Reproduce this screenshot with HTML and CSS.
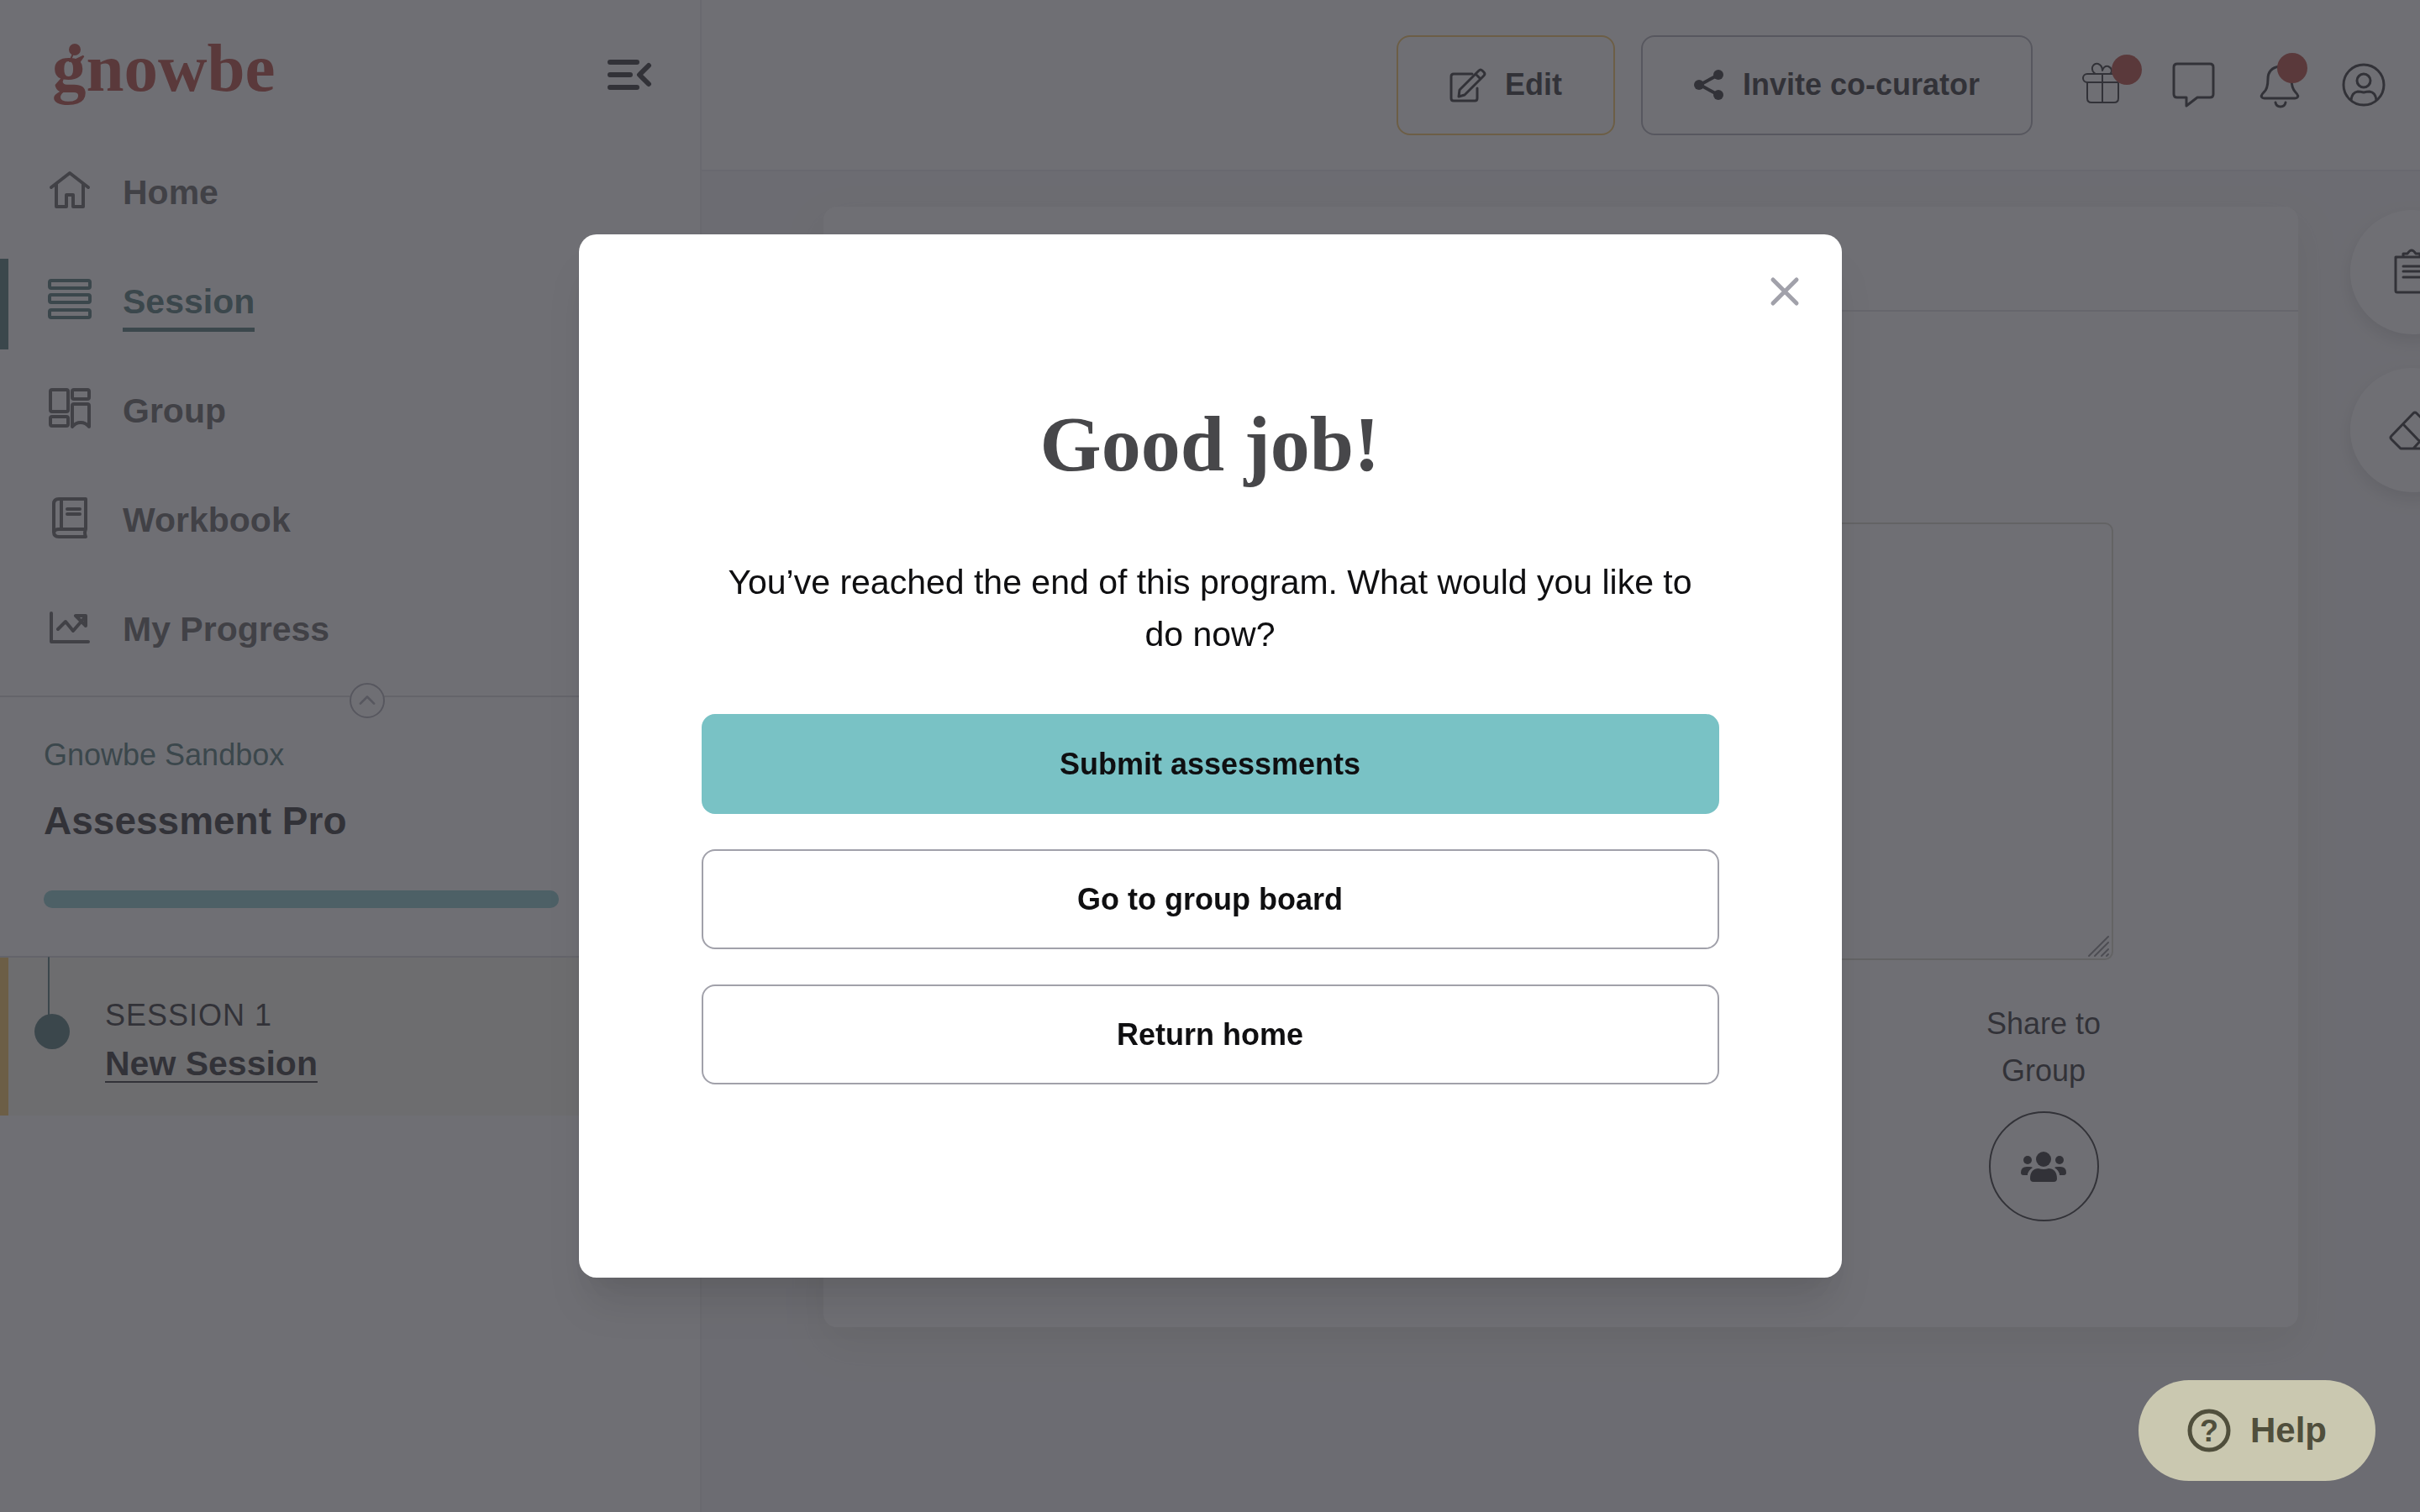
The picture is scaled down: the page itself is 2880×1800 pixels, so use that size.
FILE: index.html
```html
<!DOCTYPE html>
<html lang="en">
<head>
    <meta charset="UTF-8">
    <meta name="viewport" content="width=device-width, initial-scale=1.0">
    <title>Assessment Pro - Gnowbe</title>
    <link rel="stylesheet" href="styles.css">
</head>
<body>
    <div class="app">
        <aside class="sidebar">
            <div class="sidebar-header">
                <a href="#" class="logo">gnowbe<svg class="logo-dot" viewBox="0 0 16 28"><circle cx="10" cy="8" r="6"/><path d="M8 13L4 22"/></svg></a>
                <button type="button" class="icon-btn" aria-label="Collapse menu">
                    <svg class="icon-menu" viewBox="0 0 52 36"><path d="M3 3h32M3 18h24M3 33h32M49 7L38 18l11 11"/></svg>
                </button>
            </div>

            <nav class="menu">
                <a href="#" class="menu-item">
                    <svg class="menu-icon" viewBox="0 0 52 52"><path d="M4 23L26 6l22 17M10 19v27h12V32h8v14h12V19"/></svg>
                    <span class="menu-label">Home</span>
                </a>
                <a href="#" class="menu-item active">
                    <svg class="menu-icon" viewBox="0 0 52 52"><rect x="2" y="4" width="48" height="9" rx="2"/><rect x="2" y="21" width="48" height="9" rx="2"/><rect x="2" y="39" width="48" height="9" rx="2"/></svg>
                    <span class="menu-label">Session</span>
                </a>
                <a href="#" class="menu-item">
                    <svg class="menu-icon" viewBox="0 0 52 52"><rect x="3" y="4" width="21" height="26" rx="2"/><rect x="3" y="36" width="21" height="11" rx="2"/><rect x="29" y="4" width="20" height="11" rx="2"/><path d="M29 48V23q0-2 2-2h16q2 0 2 2v25q-4-5-10-5t-10 5z"/></svg>
                    <span class="menu-label">Group</span>
                </a>
                <a href="#" class="menu-item">
                    <svg class="menu-icon" viewBox="0 0 52 52"><path d="M45 49H13q-6 0-6-6V10q0-6 6-6h32v36H13q-5 0-6 4M45 40q-2 4 0 9M16 4v36M23 16h15M23 22h15"/></svg>
                    <span class="menu-label">Workbook</span>
                </a>
                <a href="#" class="menu-item">
                    <svg class="menu-icon" viewBox="0 0 52 52"><path d="M4 10v34h44M12 29l9-9 9 11 14-16M33 13h12v12z"/></svg>
                    <span class="menu-label">My Progress</span>
                </a>
            </nav>

            <section class="program">
                <button type="button" class="collapse-btn" aria-label="Collapse">
                    <svg viewBox="0 0 42 42"><path d="M12 25l9-9 9 9"/></svg>
                </button>
                <p class="program-company">Gnowbe Sandbox</p>
                <h2 class="program-title">Assessment Pro</h2>
                <div class="progress-bar"></div>
            </section>

            <a href="#" class="session">
                <svg class="session-dot" viewBox="0 0 44 110"><path d="M18 0v80"/><circle cx="22" cy="88" r="21"/></svg>
                <span class="session-number">SESSION 1</span>
                <span class="session-name">New Session</span>
            </a>
        </aside>

        <div class="content">
            <header class="topbar">
                <button type="button" class="btn btn-edit">
                    <svg class="icon-edit" viewBox="0 0 44 44"><path d="M27 9H5q-3 0-3 3v26q0 3 3 3h25q3 0 3-3V26"/><path d="M11 36l1-8L35 5q2-2 4 0l2 2q2 2 0 4L18 34zM31 9l6 6"/></svg>
                    Edit
                </button>
                <button type="button" class="btn btn-invite">
                    <svg class="icon-share" viewBox="0 0 36 38"><path d="M7 19L29 7M7 19l22 12"/><circle cx="6" cy="19" r="6"/><circle cx="29" cy="7" r="6"/><circle cx="29" cy="31" r="6"/></svg>
                    Invite co-curator
                </button>
                <div class="topbar-icons">
                    <button type="button" class="icon-btn" aria-label="Gifts">
                        <svg class="top-icon thin" viewBox="0 0 54 54"><path d="M4 25v18q0 5 5 5h27q5 0 5-5V25"/><rect x="-1" y="14" width="46" height="10" rx="5"/><path d="M22 14v34M22 14H14q-5-3-4-8 2-5 7-4 5 2 5 8 2-6 7-5 4 2 4 5 0 3-2 4"/></svg>
                        <span class="badge"></span>
                    </button>
                    <button type="button" class="icon-btn" aria-label="Messages">
                        <svg class="top-icon" viewBox="0 0 54 54"><path d="M9 2h39q4 0 4 4v32q0 4-4 4H33L20 52V42H9q-4 0-4-4V6q0-4 4-4z"/></svg>
                    </button>
                    <button type="button" class="icon-btn" aria-label="Notifications">
                        <svg class="top-icon" viewBox="0 0 54 54"><path d="M29 5Q15 7 15 20q0 12-5 16-4 4-2 6 1 1 3 1h36q2 0 3-1 2-2-2-6-5-5-5-16Q43 7 29 5zM24 48q1 5 6 5t6-5"/></svg>
                        <span class="badge badge-bell"></span>
                    </button>
                    <button type="button" class="icon-btn" aria-label="Account">
                        <svg class="top-icon" viewBox="0 0 54 54"><circle cx="27" cy="27" r="24"/><circle cx="27" cy="22" r="8"/><path d="M12 45q1-9 8-10 3 0 7 1 4-1 7-1 7 1 8 10"/></svg>
                    </button>
                </div>
            </header>

            <main class="main">
                <div class="card">
                    <div class="card-header"></div>
                    <div class="card-body">
                        <div class="answer-box">
                            <textarea class="answer" aria-label="Your answer"></textarea>
                            <svg class="grip" viewBox="0 0 28 28"><path d="M2 25L25 2M9 25L25 9M17 25l8-8M23 25l2-2"/></svg>
                        </div>
                        <div class="share">
                            <label class="share-label" for="shareBtn">Share to Group</label>
                            <button type="button" class="share-btn" id="shareBtn">
                                <svg viewBox="0 0 54 38"><circle cx="27" cy="10" r="9"/><circle cx="8" cy="11" r="5"/><circle cx="46" cy="11" r="5"/><path d="M11 33c0-8 4-12 10-12q3 1 6 1t6-1c6 0 10 4 10 12q0 4-4 4H15q-4 0-4-4zM0 26q0-7 7-7h3q3 0 4 1-6 4-6 9H3q-3 0-3-3zM54 26q0-7-7-7h-3q-3 0-4 1 6 4 6 9h5q3 0 3-3z"/></svg>
                            </button>
                        </div>
                    </div>
                </div>

                <div class="side-tools">
                    <button type="button" class="tool-btn" aria-label="Notes">
                        <svg viewBox="0 0 54 54"><path d="M9 9H7v40q0 2 2 2h34q2 0 2-2V11q0-2-2-2H9q-2 0-2 2M16 8V5h5q5-8 10 0h5v3M16 20h20M16 26h20M16 33h20"/></svg>
                    </button>
                    <button type="button" class="tool-btn" aria-label="Erase">
                        <svg viewBox="0 0 54 54"><path d="M13 49L2 38q-2-2 0-4L28 7q2-2 4 0l16 16q2 2 0 4L28 49zM16 20l20 21M28 49h22"/></svg>
                    </button>
                </div>
            </main>
        </div>
    </div>

    <div class="overlay">
        <div class="modal" role="dialog" aria-modal="true" aria-labelledby="modalTitle">
            <button type="button" class="close-btn" aria-label="Close">
                <svg viewBox="0 0 34 34"><path d="M3 3l28 28M31 3L3 31"/></svg>
            </button>
            <h1 class="modal-title" id="modalTitle">Good job!</h1>
            <p class="modal-text">You’ve reached the end of this program. What would you like to do now?</p>
            <div class="modal-actions">
                <button type="button" class="btn btn-primary">Submit assessments</button>
                <button type="button" class="btn">Go to group board</button>
                <button type="button" class="btn">Return home</button>
            </div>
        </div>
    </div>

    <button type="button" class="help-btn">
        <svg viewBox="0 0 52 52"><circle cx="26" cy="26" r="23"/><text x="26" y="39">?</text></svg>
        Help
    </button>
</body>
</html>
```
FILE: styles.css
```css
* {
    margin: 0;
    padding: 0;
    box-sizing: border-box;
}

body {
    background-color: #f4f4f5;
    color: #0f0f11;
    font-family: "Liberation Sans", Arial, sans-serif;
    font-size: 36px;
    overflow: hidden;
}

a {
    color: inherit;
    text-decoration: none;
}

button {
    font: inherit;
    color: inherit;
    background: none;
    border: none;
    cursor: pointer;
}

svg {
    display: block;
    flex-shrink: 0;
    fill: none;
    stroke: currentColor;
    stroke-width: 4;
    stroke-linecap: round;
    stroke-linejoin: round;
    overflow: visible;
}

.app {
    display: flex;
    min-height: 100vh;
}

/* Sidebar */
.sidebar {
    width: 29%;
    background: #fff;
    border-right: 2px solid #e8e8ea;
}

.sidebar-header {
    display: flex;
    justify-content: space-between;
    align-items: center;
    height: 178px;
    padding: 0 58px 0 62px;
}

.logo {
    position: relative;
    padding-bottom: 16px;
    color: #ab2b1e;
    font-family: "Liberation Serif", "Times New Roman", serif;
    font-size: 81px;
    font-weight: bold;
    line-height: 96px;
}

.logo-dot {
    position: absolute;
    left: 17px;
    top: 18px;
    width: 16px;
    height: 28px;
    stroke-width: 2;
}

.logo-dot circle {
    fill: currentColor;
}

.icon-menu {
    width: 52px;
    height: 36px;
    stroke-width: 6;
}

.menu {
    display: flex;
    flex-direction: column;
    gap: 22px;
    padding-bottom: 22px;
    color: #47474a;
    font-size: 41px;
    font-weight: bold;
}

.menu-item {
    display: flex;
    align-items: center;
    gap: 37px;
    height: 108px;
    padding-left: 47px;
    border-left: 10px solid transparent;
}

.menu-item.active {
    color: #335f60;
    border-left-color: #335f60;
}

.menu-icon {
    width: 52px;
    height: 52px;
    margin-bottom: 12px;
}

.menu-label {
    line-height: 58px;
    padding-bottom: 2px;
    border-bottom: 5px solid transparent;
}

.active .menu-label {
    border-bottom-color: #335f60;
}

.program {
    position: relative;
    padding: 46px 52px 57px;
    border-top: 2px solid #d4d4d8;
    border-bottom: 2px solid #d4d4d8;
}

.collapse-btn {
    position: absolute;
    top: -17px;
    left: 416px;
    width: 42px;
    height: 42px;
    background: #fff;
    border: 2px solid #a1a1aa;
    border-radius: 50%;
    color: #a1a1aa;
}

.collapse-btn svg {
    width: 38px;
    height: 38px;
    stroke-width: 3;
}

.program-company {
    color: #335f60;
    line-height: 46px;
    margin-bottom: 25px;
}

.program-title {
    font-size: 46px;
    line-height: 60px;
    margin-bottom: 53px;
}

.progress-bar {
    width: 84%;
    height: 21px;
    background: #79c2c5;
    border-radius: 10px;
}

.session {
    position: relative;
    display: flex;
    flex-direction: column;
    align-items: flex-start;
    padding: 46px 52px 33px 115px;
    border-left: 10px solid #f3bb4a;
    background: #f5f5ea;
}

.session-dot {
    position: absolute;
    top: 0;
    left: 30px;
    width: 44px;
    height: 110px;
    color: #335f60;
    stroke-width: 2;
}

.session-dot circle {
    fill: currentColor;
    stroke: none;
}

.session-number {
    letter-spacing: 1px;
    line-height: 46px;
    margin-bottom: 5px;
}

.session-name {
    font-size: 41px;
    font-weight: bold;
    line-height: 58px;
    text-decoration: underline;
    text-decoration-thickness: 2px;
    text-underline-offset: 7px;
}

/* Top bar */
.content {
    flex: 1;
    display: flex;
    flex-direction: column;
    min-width: 0;
}

.topbar {
    display: flex;
    justify-content: flex-end;
    align-items: center;
    gap: 31px;
    height: 204px;
    padding-right: 40px;
    background: #fff;
    border-bottom: 2px solid #e8e8ea;
}

.btn {
    display: flex;
    justify-content: center;
    align-items: center;
    gap: 22px;
    height: 119px;
    padding: 0 61px;
    border: 2px solid #a1a1aa;
    border-radius: 16px;
    font-weight: bold;
}

.btn-edit {
    border-color: #f3bb4a;
}

.icon-edit {
    width: 44px;
    height: 44px;
    stroke-width: 3;
}

.icon-share {
    width: 36px;
    height: 38px;
}

.icon-share circle {
    fill: currentColor;
    stroke: none;
}

.topbar-icons {
    display: flex;
    gap: 48px;
    margin-left: 30px;
}

.icon-btn {
    position: relative;
}

.top-icon {
    width: 54px;
    height: 54px;
    stroke-width: 3;
}

.top-icon.thin {
    stroke-width: 2;
}

.badge {
    position: absolute;
    top: -9px;
    left: 33px;
    width: 36px;
    height: 36px;
    background: #ab2b1e;
    border-radius: 50%;
}

.badge-bell {
    top: -11px;
    left: 26px;
}

/* Card */
.main {
    position: relative;
    flex: 1;
    padding: 42px 145px;
}

.card {
    background: #fff;
    border-radius: 16px;
    box-shadow: 0 20px 50px rgba(90, 90, 50, 0.14);
}

.card-header {
    height: 125px;
    border-bottom: 2px solid #dcdce0;
}

.card-body {
    padding: 251px 220px 126px;
}

.answer-box {
    position: relative;
    height: 521px;
    margin-bottom: 48px;
}

.answer {
    display: block;
    width: 100%;
    height: 100%;
    padding: 24px;
    background: transparent;
    border: 2px solid #cdcdc0;
    border-radius: 10px;
    font: inherit;
    resize: none;
}

.grip {
    position: absolute;
    right: 3px;
    bottom: 2px;
    width: 28px;
    height: 28px;
    color: #77777c;
    stroke-width: 2;
}

.share {
    display: flex;
    flex-direction: column;
    align-items: center;
    gap: 20px;
    width: 166px;
    margin-left: auto;
}

.share-label {
    line-height: 56px;
    text-align: center;
}

.share-btn {
    display: flex;
    justify-content: center;
    align-items: center;
    width: 131px;
    height: 131px;
    border: 2px solid #0f0f11;
    border-radius: 50%;
}

.share-btn svg {
    width: 54px;
    height: 38px;
    fill: currentColor;
    stroke: none;
}

.side-tools {
    position: absolute;
    top: 46px;
    right: -65px;
    display: flex;
    flex-direction: column;
    gap: 40px;
}

.tool-btn {
    display: flex;
    justify-content: center;
    align-items: center;
    width: 148px;
    height: 148px;
    background: #fff;
    border-radius: 50%;
    box-shadow: 0 8px 20px rgba(60, 60, 60, 0.2);
}

.tool-btn svg {
    width: 54px;
    height: 54px;
    stroke-width: 3;
}

/* Modal */
.overlay {
    position: fixed;
    inset: 0;
    display: flex;
    justify-content: center;
    align-items: center;
    background: rgba(63, 63, 70, 0.75);
}

.modal {
    position: relative;
    width: 1503px;
    max-width: 96%;
    padding: 193px 146px 230px;
    background: #fff;
    border-radius: 21px;
    box-shadow: 0 40px 50px -10px rgba(0, 0, 0, 0.1), 0 20px 20px -10px rgba(0, 0, 0, 0.04);
    text-align: center;
}

.close-btn {
    position: absolute;
    top: 51px;
    right: 51px;
    color: #a1a1aa;
}

.close-btn svg {
    width: 34px;
    height: 34px;
    stroke-width: 5;
}

.modal-title {
    color: #47474a;
    font-family: "Liberation Serif", "Times New Roman", serif;
    font-size: 94px;
    line-height: 112px;
    margin-bottom: 78px;
}

.modal-text {
    padding: 0 20px;
    font-size: 41px;
    line-height: 62px;
    margin-bottom: 64px;
}

.modal-actions {
    display: flex;
    flex-direction: column;
    gap: 42px;
}

.btn-primary {
    background: #79c2c5;
    border-color: #79c2c5;
}

/* Help */
.help-btn {
    position: fixed;
    right: 53px;
    bottom: 37px;
    display: flex;
    align-items: center;
    gap: 23px;
    height: 120px;
    padding: 0 58px;
    background: #cac8b0;
    border-radius: 60px;
    color: #504f3c;
    font-size: 42px;
    font-weight: bold;
}

.help-btn svg {
    width: 52px;
    height: 52px;
    stroke-width: 5;
}

.help-btn text {
    fill: currentColor;
    stroke: none;
    font-size: 36px;
    text-anchor: middle;
}
```
